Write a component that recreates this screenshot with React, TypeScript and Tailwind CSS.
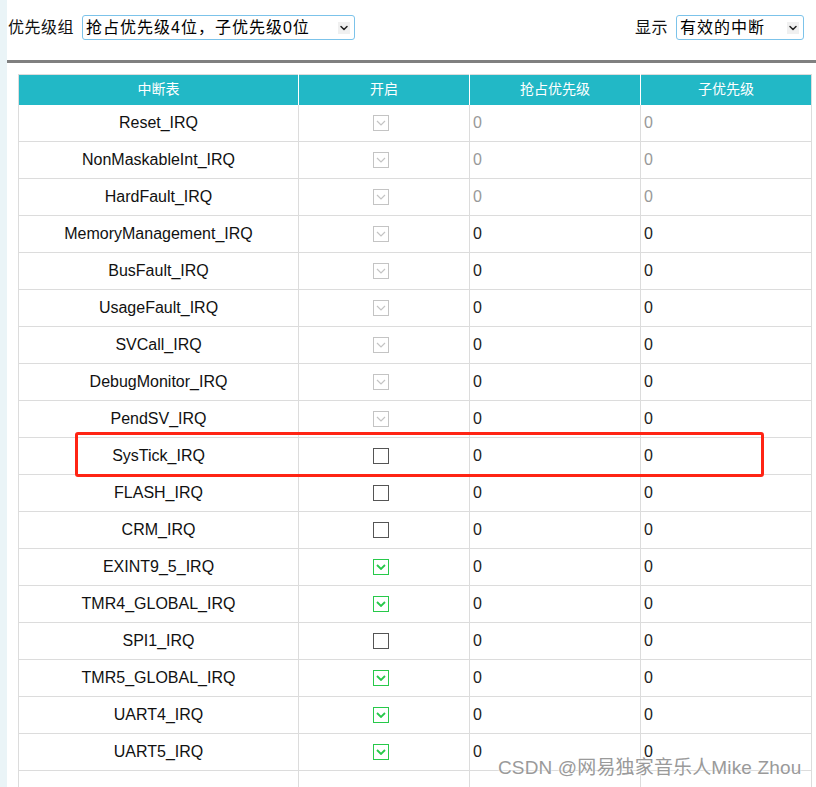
import { ChevronDown } from "lucide-react";

type Irq = { name: string; state: "locked" | "on" | "off"; muted?: boolean };

const irqs: Irq[] = [
  { name: "Reset_IRQ", state: "locked", muted: true },
  { name: "NonMaskableInt_IRQ", state: "locked", muted: true },
  { name: "HardFault_IRQ", state: "locked", muted: true },
  { name: "MemoryManagement_IRQ", state: "locked" },
  { name: "BusFault_IRQ", state: "locked" },
  { name: "UsageFault_IRQ", state: "locked" },
  { name: "SVCall_IRQ", state: "locked" },
  { name: "DebugMonitor_IRQ", state: "locked" },
  { name: "PendSV_IRQ", state: "locked" },
  { name: "SysTick_IRQ", state: "off" },
  { name: "FLASH_IRQ", state: "off" },
  { name: "CRM_IRQ", state: "off" },
  { name: "EXINT9_5_IRQ", state: "on" },
  { name: "TMR4_GLOBAL_IRQ", state: "on" },
  { name: "SPI1_IRQ", state: "off" },
  { name: "TMR5_GLOBAL_IRQ", state: "on" },
  { name: "UART4_IRQ", state: "on" },
  { name: "UART5_IRQ", state: "on" },
];

const font = {
  fontFamily: '"Liberation Sans", Arial, "Noto Sans CJK SC", sans-serif',
};

function Box({ state }: { state: Irq["state"] }) {
  if (state === "off") {
    return <span className="block w-[16px] h-[16px] border border-[#555] bg-white" />;
  }
  const color = state === "on" ? "#27c94a" : "#c4c4c4";
  return (
    <span
      className="flex items-center justify-center w-[16px] h-[16px] border bg-white"
      style={{ borderColor: color }}
    >
      <svg width="10" height="6" viewBox="0 0 10 6">
        <path d="M1 1 L5 5 L9 1" fill="none" stroke={color} strokeWidth={state === "on" ? 1.8 : 1.2} />
      </svg>
    </span>
  );
}

function Picker({ value, width }: { value: string; width: string }) {
  return (
    <div
      className={`flex items-center justify-between h-[25px] ${width} border border-[#7cc3ea] rounded-[3px] bg-white pl-[3px] pr-[4px] text-[16px] tracking-[1px] text-black`}
    >
      <span>{value}</span>
      <span className="flex items-center justify-center w-[12px] h-[12px] bg-[#f0f0f0]">
        <ChevronDown className="w-[12px] h-[12px] text-[#222]" strokeWidth={3} />
      </span>
    </div>
  );
}

export default function App() {
  return (
    <div className="relative h-[787px] w-[816px] overflow-hidden bg-white flex" style={font}>
      {/* left gutter */}
      <div className="w-[7px] shrink-0 bg-[#eaf4f7]" />

      <div className="flex-1">
        {/* toolbar */}
        <div className="flex items-center justify-between pt-[15px] pl-[1px] pr-[12px] text-[16px] tracking-[0.5px] text-[#111]">
          <div className="flex items-center gap-[8px]">
            <span>优先级组</span>
            <Picker value="抢占优先级4位，子优先级0位" width="w-[273px]" />
          </div>
          <div className="flex items-center gap-[8px]">
            <span>显示</span>
            <Picker value="有效的中断" width="w-[128px]" />
          </div>
        </div>

        <div className="mt-[20px] h-[3px] bg-[#808080]" />

        {/* interrupt table */}
        <table className="mt-[11px] ml-[11px] w-[793px] border-collapse table-fixed border border-[#dcdcdc]">
          <colgroup>
            <col className="w-[280px]" />
            <col className="w-[171px]" />
            <col className="w-[171px]" />
            <col className="w-[171px]" />
          </colgroup>
          <thead>
            <tr className="h-[30px] bg-[#22b8c6] text-white text-[14px]">
              <th className="font-normal border-r border-white">中断表</th>
              <th className="font-normal border-r border-white">开启</th>
              <th className="font-normal border-r border-white">抢占优先级</th>
              <th className="font-normal">子优先级</th>
            </tr>
          </thead>
          <tbody className="text-[16px]">
            {irqs.map((irq) => (
              <tr key={irq.name} className="h-[37px] border-b border-[#dcdcdc]">
                <td className="text-center text-[#111] border-r border-[#dcdcdc]">{irq.name}</td>
                <td className="border-r border-[#dcdcdc]">
                  <div className="flex justify-center pr-[7px]">
                    <Box state={irq.state} />
                  </div>
                </td>
                <td className={`pl-[3px] border-r border-[#dcdcdc] ${irq.muted ? "text-[#999]" : "text-[#222]"}`}>0</td>
                <td className={`pl-[3px] ${irq.muted ? "text-[#999]" : "text-[#222]"}`}>0</td>
              </tr>
            ))}
            <tr className="h-[37px]">
              <td className="border-r border-[#dcdcdc]" />
              <td className="border-r border-[#dcdcdc]" />
              <td className="border-r border-[#dcdcdc]" />
              <td />
            </tr>
          </tbody>
        </table>
      </div>

      {/* highlight around SysTick row */}
      <div className="absolute left-[75px] top-[432px] w-[689px] h-[45px] border-[3px] border-[#ff2414] rounded-[3px]" />

      {/* watermark */}
      <div
        className="absolute left-[498px] top-[754px] text-[19px] tracking-[0.15px] text-[#9a9a9a] whitespace-nowrap"
        style={{ textShadow: "0 0 2px #fff, 0 0 2px #fff" }}
      >
        CSDN @网易独家音乐人Mike Zhou
      </div>
    </div>
  );
}
